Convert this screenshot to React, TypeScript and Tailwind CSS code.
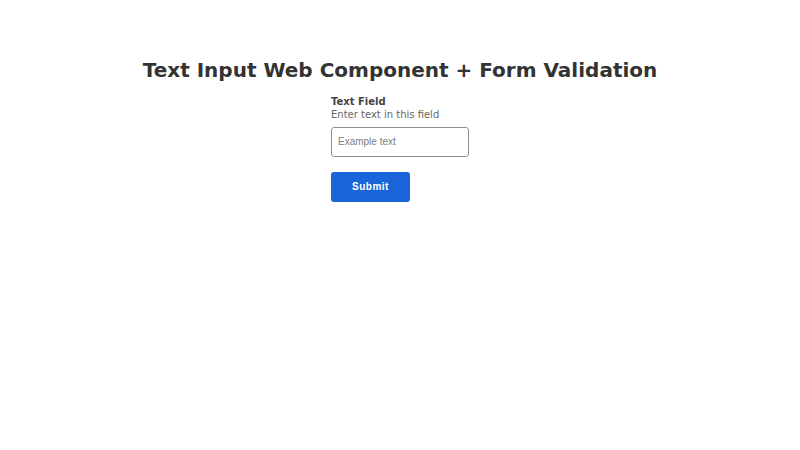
export default function App() {
  return (
    <div className="min-h-screen bg-white font-['DejaVu_Sans',sans-serif]">
      <h1 className="pt-[58px] text-center text-[20px] font-bold leading-[24px] text-[#333333]">
        Text Input Web Component + Form Validation
      </h1>
      <form className="mx-auto mt-[14px] flex w-[138px] flex-col" onSubmit={(e) => e.preventDefault()}>
        <label className="text-[10px] font-bold leading-[12.5px] text-[#444444]">Text Field</label>
        <span className="text-[10px] leading-[12.5px] text-[#666666]">Enter text in this field</span>
        <input
          type="text"
          placeholder="Example text"
          className="mt-[5.5px] h-[30px] w-[138px] rounded-[3px] border border-[#8f8f8f] px-[6px] font-['Liberation_Sans',Arial,sans-serif] text-[10px] text-[#333] placeholder:text-[#808080]"
        />
        <button
          type="submit"
          className="mt-[15px] h-[30px] w-[79px] rounded-[3px] bg-[#1a64d9] font-['Liberation_Sans',Arial,sans-serif] text-[10px] font-bold tracking-[0.5px] text-white"
        >
          Submit
        </button>
      </form>
    </div>
  );
}
